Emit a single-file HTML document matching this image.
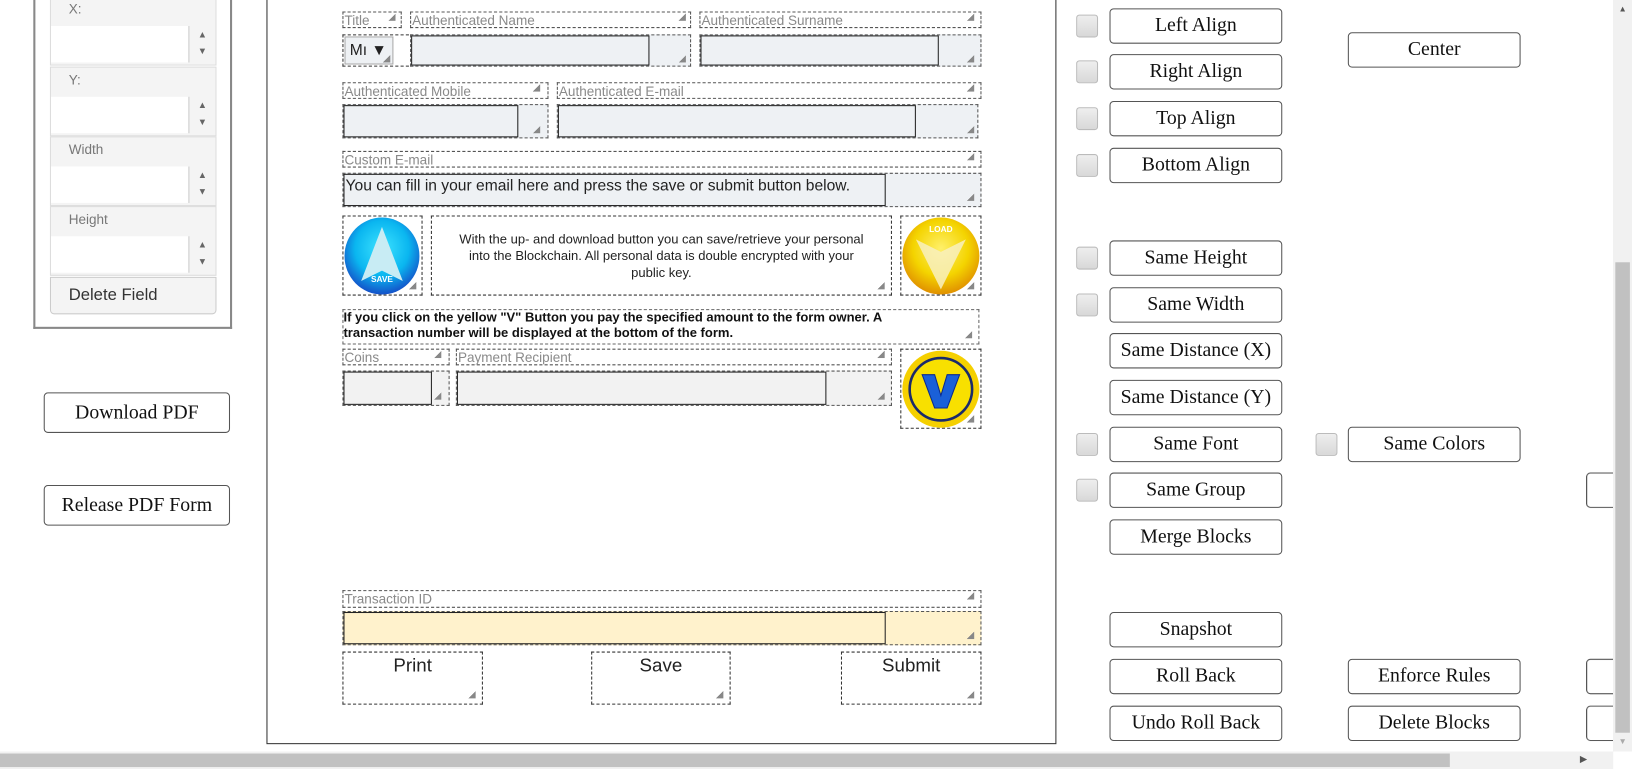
<!DOCTYPE html>
<html><head><meta charset="utf-8"><style>
*{box-sizing:border-box;margin:0;padding:0}
html,body{width:1632px;height:769px;overflow:hidden;background:#fff}
#w{position:absolute;left:0;top:0;width:1568px;height:739px;transform:scale(1.0408);transform-origin:0 0;font-family:"Liberation Sans",sans-serif}
.a{position:absolute}
.d{position:absolute;border:1px dashed #333}
.lb{position:absolute;border:1px dashed #555;color:#8a8a8a;font-size:13px;line-height:15px;white-space:nowrap;overflow:hidden;padding-left:1px}
.in{position:absolute;border:1px solid #222;background:#eef1f4}
.f{position:absolute;border:1px dashed #555;background:#eef1f4}
.g{position:absolute;width:7px;height:7px;background:linear-gradient(135deg,transparent 50%,#888 50%)}
.btn{position:absolute;width:166px;height:34px;border:1px solid #555;border-radius:4px;font-family:"Liberation Serif",serif;font-size:19px;text-align:center;line-height:32px;color:#111;background:#fff;white-space:nowrap}
.cb{position:absolute;width:21px;height:22px;border:1px solid #bbb;border-radius:3px;background:linear-gradient(#eee,#d8d8d8)}
.fld{position:absolute;left:48px;width:160px;height:67px;background:#f4f4f4;border:1px solid #ddd}
.fld span{position:absolute;left:17px;top:4px;font-size:13px;color:#777}
.fld .w{position:absolute;left:0;top:28px;width:132px;height:35px;background:#fff}
.fld .s{position:absolute;left:132px;top:28px;width:26px;height:35px;background:#f4f4f4;border-left:1px solid #ccc;font-size:9px;color:#666;text-align:center;line-height:16px}
.pb{position:absolute;border:1px dashed #333;font-size:18px;text-align:center;color:#222;padding-top:2px}
</style></head><body><div id="w">
<div class="a" style="left:32px;top:-5px;width:191px;height:321px;border:2px solid #888;border-top:none"></div>
<div class="fld" style="top:-4px"><span>X:</span><div class="w"></div><div class="s">▲<br>▼</div></div>
<div class="fld" style="top:64px"><span>Y:</span><div class="w"></div><div class="s">▲<br>▼</div></div>
<div class="fld" style="top:131px"><span>Width</span><div class="w"></div><div class="s">▲<br>▼</div></div>
<div class="fld" style="top:198px"><span>Height</span><div class="w"></div><div class="s">▲<br>▼</div></div>
<div class="a" style="left:48px;top:266px;width:160px;height:36px;background:#f4f4f4;border:1px solid #ccc;border-radius:0 0 4px 4px;font-size:16px;color:#333;padding:8px 0 0 17px">Delete Field</div>
<div class="btn" style="left:42px;top:377px;width:179px;height:39px;line-height:37px">Download PDF</div>
<div class="btn" style="left:42px;top:466px;width:179px;height:39px;line-height:37px">Release PDF Form</div>

<div class="a" style="left:256px;top:-2px;width:759px;height:717px;border:1px solid #333"></div>

<div class="lb" style="left:329px;top:11px;width:57px;height:16px">Title</div>
<div class="d" style="left:329px;top:33px;width:69px;height:31px"></div>
<div class="a" style="left:331px;top:35px;width:47px;height:27px;border:1px solid #aaa;background:#eef1f4;font-size:15px;padding:4px 0 0 4px;color:#222">Mı ▼</div>
<div class="lb" style="left:394px;top:11px;width:270px;height:16px">Authenticated Name</div>
<div class="f" style="left:394px;top:33px;width:270px;height:31px"></div><div class="in" style="left:395px;top:34px;width:229px;height:29px"></div>
<div class="lb" style="left:672px;top:11px;width:271px;height:16px">Authenticated Surname</div>
<div class="f" style="left:672px;top:33px;width:271px;height:31px"></div><div class="in" style="left:673px;top:34px;width:229px;height:29px"></div>

<div class="lb" style="left:329px;top:79px;width:198px;height:16px">Authenticated Mobile</div>
<div class="f" style="left:329px;top:100px;width:198px;height:33px"></div><div class="in" style="left:330px;top:101px;width:168px;height:31px"></div>
<div class="lb" style="left:535px;top:79px;width:408px;height:16px">Authenticated E-mail</div>
<div class="f" style="left:535px;top:100px;width:405px;height:33px"></div><div class="in" style="left:536px;top:101px;width:344px;height:31px"></div>

<div class="lb" style="left:329px;top:145px;width:614px;height:16px">Custom E-mail</div>
<div class="f" style="left:329px;top:166px;width:614px;height:33px"></div>
<div class="in" style="left:330px;top:167px;width:521px;height:31px;font-size:15px;color:#222;padding:2px 0 0 1px;white-space:nowrap;overflow:hidden">You can fill in your email here and press the save or submit button below.</div>

<div class="d" style="left:329px;top:207px;width:77px;height:77px"></div>
<svg class="a" style="left:330px;top:208px" width="75" height="76"><defs><radialGradient id="b1" cx="50%" cy="40%" r="60%"><stop offset="0" stop-color="#3de3ff"/><stop offset=".6" stop-color="#0ab6f0"/><stop offset="1" stop-color="#1450c8"/></radialGradient></defs><ellipse cx="37" cy="38" rx="36" ry="37" fill="url(#b1)"/><path d="M37 10 L57 62 L37 52 L17 62Z" fill="#c8ecf4"/><text x="37" y="63" font-size="8" font-weight="bold" fill="#fff" text-anchor="middle" font-family="Liberation Sans">SAVE</text></svg>
<div class="d" style="left:414px;top:207px;width:443px;height:77px;font-size:12.5px;color:#222;text-align:center;line-height:16px;padding-top:14px">With the up- and download button you can save/retrieve your personal<br>into the Blockchain. All personal data is double encrypted with your<br>public key.</div>
<div class="d" style="left:865px;top:207px;width:78px;height:77px"></div>
<svg class="a" style="left:866px;top:208px" width="76" height="76"><defs><radialGradient id="y1" cx="50%" cy="40%" r="60%"><stop offset="0" stop-color="#fff06a"/><stop offset=".6" stop-color="#f4d400"/><stop offset="1" stop-color="#e09000"/></radialGradient></defs><circle cx="38" cy="38" r="37" fill="url(#y1)"/><path d="M14 22 L38 70 L62 22 L38 34Z" fill="#f8f0c0" opacity=".85"/><text x="38" y="15" font-size="8" font-weight="bold" fill="#fff" text-anchor="middle" font-family="Liberation Sans">LOAD</text></svg>

<div class="d" style="left:329px;top:297px;width:612px;height:34px;font-size:12.5px;font-weight:bold;color:#111;line-height:15px;border-color:#666">If you click on the yellow "V" Button you pay the specified amount to the form owner. A<br>transaction number will be displayed at the bottom of the form.</div>

<div class="lb" style="left:329px;top:335px;width:103px;height:16px">Coins</div>
<div class="f" style="left:329px;top:356px;width:103px;height:34px;background:#f2f2f2"></div><div class="in" style="left:330px;top:357px;width:85px;height:32px;background:#f2f2f2"></div>
<div class="lb" style="left:438px;top:335px;width:419px;height:16px">Payment Recipient</div>
<div class="f" style="left:438px;top:356px;width:419px;height:34px;background:#f2f2f2"></div><div class="in" style="left:439px;top:357px;width:355px;height:32px;background:#f2f2f2"></div>
<div class="d" style="left:865px;top:335px;width:78px;height:77px"></div>
<svg class="a" style="left:866px;top:336px" width="76" height="76"><circle cx="38" cy="38" r="37" fill="#f5d000"/><circle cx="38" cy="38" r="30" fill="#f8e000" stroke="#1a2a6a" stroke-width="2.5"/><path d="M20 24 L32 24 L38 44 L44 24 L56 24 L44 56 L32 56Z" fill="#1a60d8" stroke="#0a2a90" stroke-width="1"/></svg>

<div class="lb" style="left:329px;top:567px;width:614px;height:17px">Transaction ID</div>
<div class="f" style="left:329px;top:587px;width:614px;height:33px;background:#fff2cc"></div><div class="in" style="left:330px;top:588px;width:521px;height:31px;background:#fff2cc"></div>

<div class="pb" style="left:329px;top:626px;width:135px;height:51px">Print</div>
<div class="pb" style="left:568px;top:626px;width:134px;height:51px">Save</div>
<div class="pb" style="left:808px;top:626px;width:135px;height:51px">Submit</div>

<div class="g" style="left:373px;top:13px"></div><div class="g" style="left:652px;top:13px"></div><div class="g" style="left:929px;top:13px"></div>
<div class="g" style="left:368px;top:53px"></div><div class="g" style="left:652px;top:53px"></div><div class="g" style="left:929px;top:53px"></div>
<div class="g" style="left:512px;top:81px"></div><div class="g" style="left:929px;top:81px"></div>
<div class="g" style="left:512px;top:121px"></div><div class="g" style="left:929px;top:121px"></div>
<div class="g" style="left:929px;top:147px"></div><div class="g" style="left:929px;top:186px"></div>
<div class="g" style="left:393px;top:271px"></div><div class="g" style="left:843px;top:271px"></div><div class="g" style="left:929px;top:271px"></div>
<div class="g" style="left:927px;top:318px"></div>
<div class="g" style="left:417px;top:337px"></div><div class="g" style="left:843px;top:337px"></div>
<div class="g" style="left:417px;top:377px"></div><div class="g" style="left:843px;top:377px"></div><div class="g" style="left:929px;top:399px"></div>
<div class="g" style="left:929px;top:569px"></div><div class="g" style="left:929px;top:607px"></div>
<div class="g" style="left:450px;top:664px"></div><div class="g" style="left:688px;top:664px"></div><div class="g" style="left:929px;top:664px"></div>

<div class="cb" style="left:1034px;top:14px"></div><div class="btn" style="left:1066px;top:8px">Left Align</div>
<div class="cb" style="left:1034px;top:58px"></div><div class="btn" style="left:1066px;top:52px">Right Align</div>
<div class="cb" style="left:1034px;top:103px"></div><div class="btn" style="left:1066px;top:97px">Top Align</div>
<div class="cb" style="left:1034px;top:148px"></div><div class="btn" style="left:1066px;top:142px">Bottom Align</div>
<div class="btn" style="left:1295px;top:31px">Center</div>
<div class="cb" style="left:1034px;top:237px"></div><div class="btn" style="left:1066px;top:231px">Same Height</div>
<div class="cb" style="left:1034px;top:282px"></div><div class="btn" style="left:1066px;top:276px">Same Width</div>
<div class="btn" style="left:1066px;top:320px">Same Distance (X)</div>
<div class="btn" style="left:1066px;top:365px">Same Distance (Y)</div>
<div class="cb" style="left:1034px;top:416px"></div><div class="btn" style="left:1066px;top:410px">Same Font</div>
<div class="cb" style="left:1264px;top:416px"></div><div class="btn" style="left:1295px;top:410px">Same Colors</div>
<div class="cb" style="left:1034px;top:460px"></div><div class="btn" style="left:1066px;top:454px">Same Group</div>
<div class="btn" style="left:1066px;top:499px">Merge Blocks</div>
<div class="btn" style="left:1066px;top:588px">Snapshot</div>
<div class="btn" style="left:1066px;top:633px">Roll Back</div>
<div class="btn" style="left:1295px;top:633px">Enforce Rules</div>
<div class="btn" style="left:1066px;top:678px">Undo Roll Back</div>
<div class="btn" style="left:1295px;top:678px">Delete Blocks</div>
<div class="btn" style="left:1524px;top:454px"></div>
<div class="btn" style="left:1524px;top:633px"></div>
<div class="btn" style="left:1524px;top:678px"></div>
<div class="a" style="left:1550px;top:0;width:18px;height:722px;background:#f1f1f1"></div>
<div class="a" style="left:1552px;top:252px;width:14px;height:452px;background:#c1c1c1"></div>
<div class="a" style="left:1555px;top:4px;font-size:8px;color:#555">▲</div>
<div class="a" style="left:1555px;top:708px;font-size:8px;color:#aaa">▼</div>
<div class="a" style="left:0;top:722px;width:1550px;height:17px;background:#f1f1f1"></div>
<div class="a" style="left:0;top:724px;width:1393px;height:13px;background:#c1c1c1"></div>
<div class="a" style="left:1518px;top:724px;font-size:9px;color:#555">▶</div>
</div></body></html>
